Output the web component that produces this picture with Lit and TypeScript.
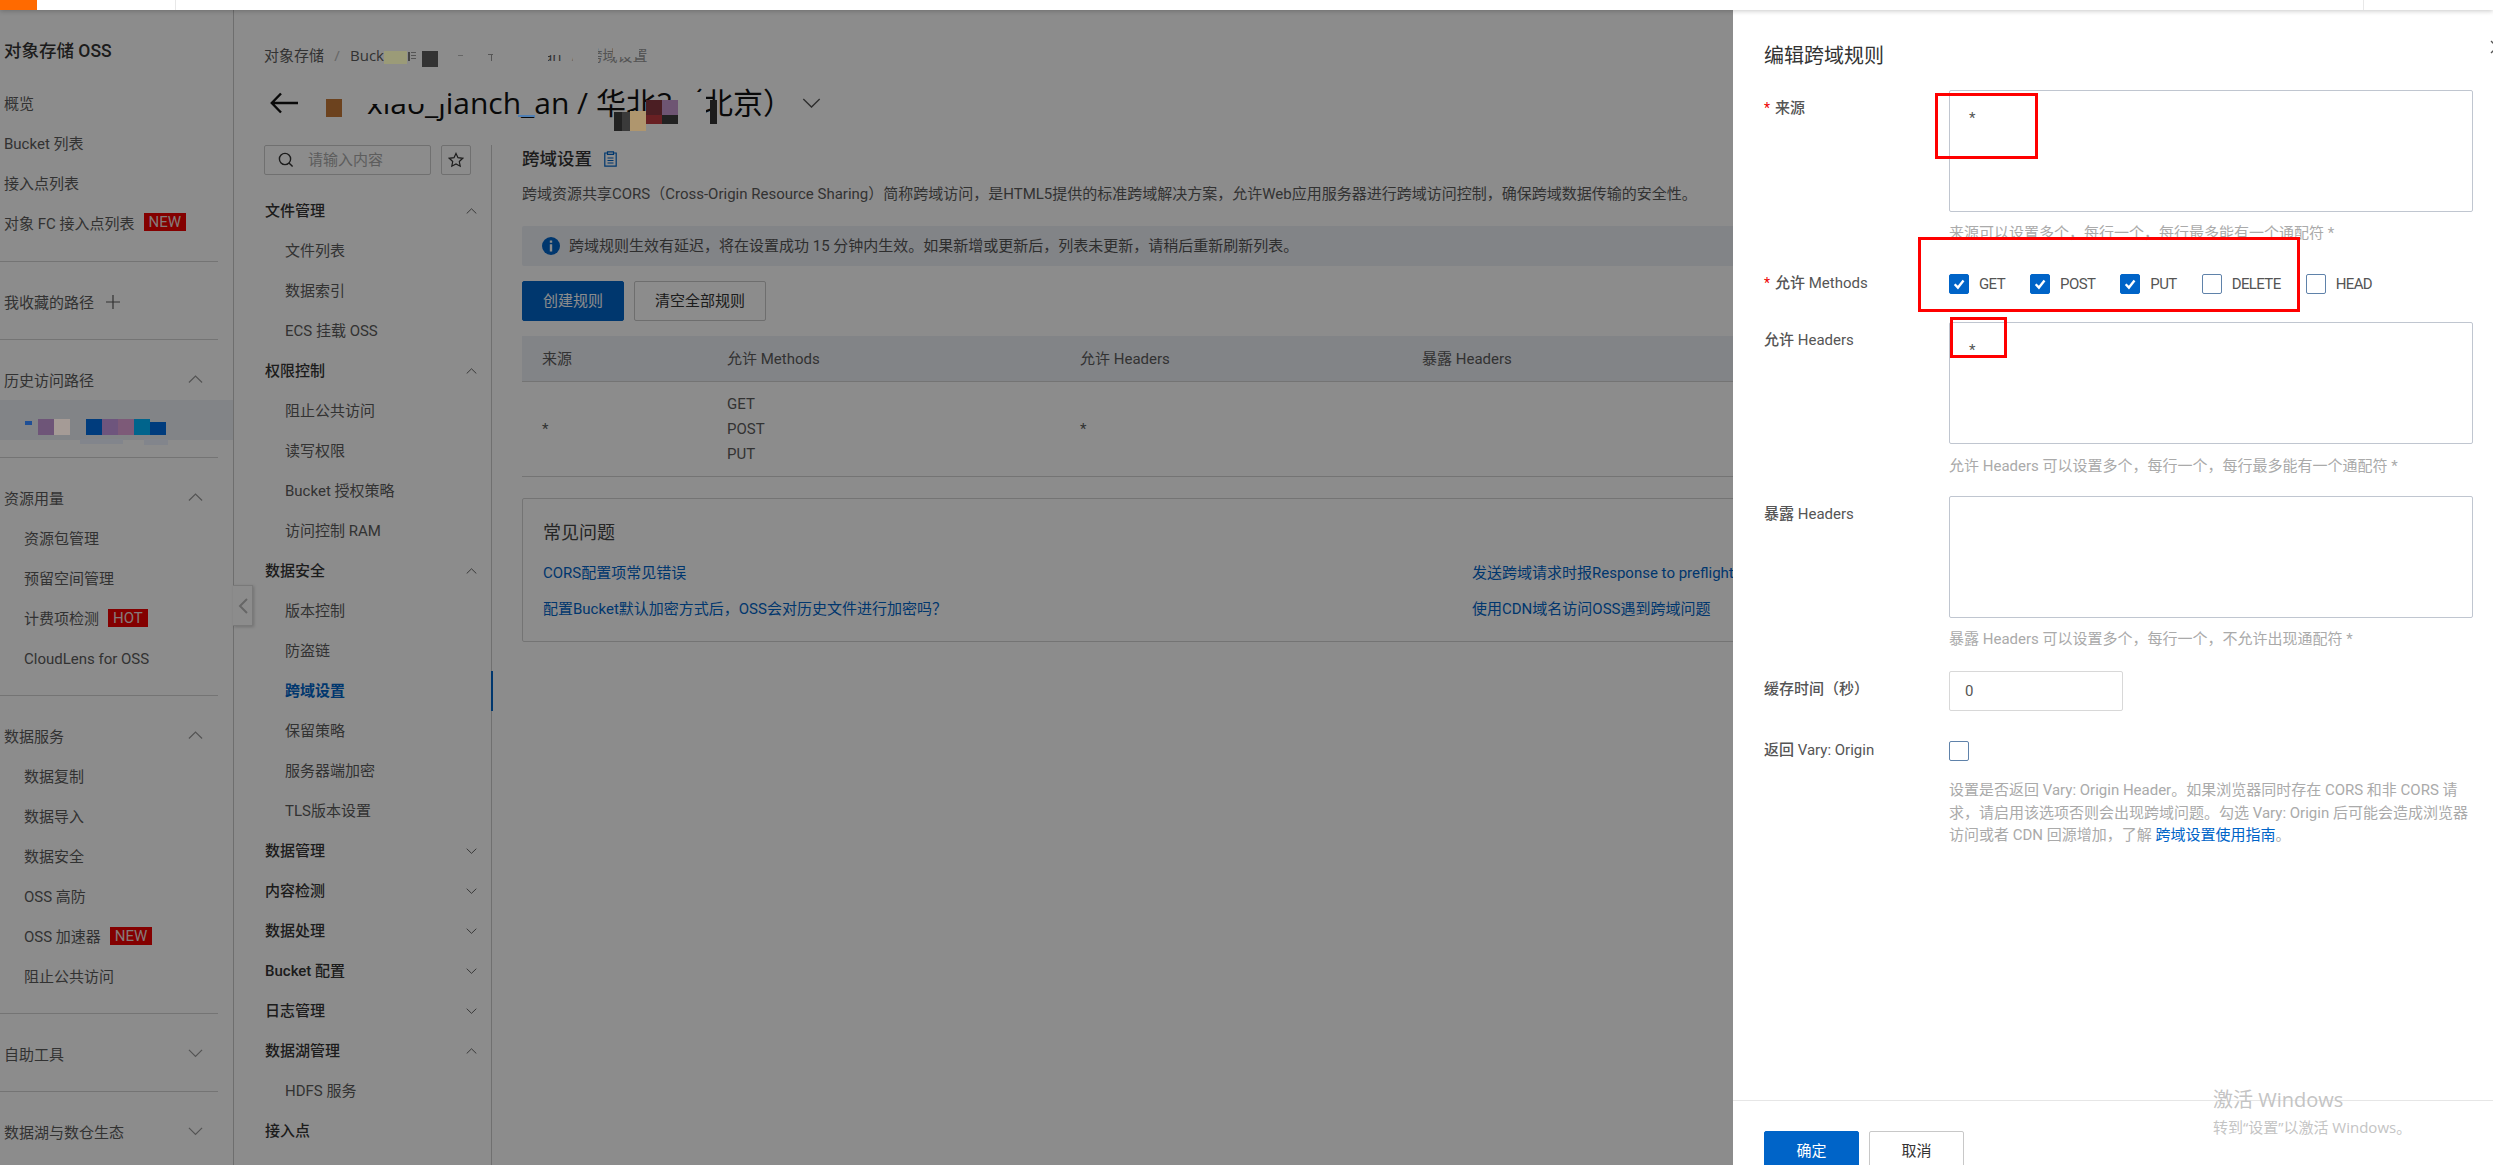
import { LitElement, html, css, svg } from 'lit';
import { customElement } from 'lit/decorators.js';

type NavItem = { text: string; sub?: boolean; badge?: string; open?: boolean; selected?: boolean };

const SIDE_SECTIONS: NavItem[][] = [
  [
    { text: '概览' },
    { text: 'Bucket 列表' },
    { text: '接入点列表' },
    { text: '对象 FC 接入点列表', badge: 'NEW' },
  ],
  [{ text: '我收藏的路径' }],
  [{ text: '历史访问路径', open: true }, { text: '', selected: true }],
  [
    { text: '资源用量', open: true },
    { text: '资源包管理', sub: true },
    { text: '预留空间管理', sub: true },
    { text: '计费项检测', sub: true, badge: 'HOT' },
    { text: 'CloudLens for OSS', sub: true },
  ],
  [
    { text: '数据服务', open: true },
    { text: '数据复制', sub: true },
    { text: '数据导入', sub: true },
    { text: '数据安全', sub: true },
    { text: 'OSS 高防', sub: true },
    { text: 'OSS 加速器', sub: true, badge: 'NEW' },
    { text: '阻止公共访问', sub: true },
  ],
  [{ text: '自助工具', open: false }],
  [{ text: '数据湖与数仓生态', open: false }],
];

type SubItem = { text: string; group?: boolean; open?: boolean; active?: boolean };

const SUB_NAV: SubItem[] = [
  { text: '文件管理', group: true, open: true },
  { text: '文件列表' },
  { text: '数据索引' },
  { text: 'ECS 挂载 OSS' },
  { text: '权限控制', group: true, open: true },
  { text: '阻止公共访问' },
  { text: '读写权限' },
  { text: 'Bucket 授权策略' },
  { text: '访问控制 RAM' },
  { text: '数据安全', group: true, open: true },
  { text: '版本控制' },
  { text: '防盗链' },
  { text: '跨域设置', active: true },
  { text: '保留策略' },
  { text: '服务器端加密' },
  { text: 'TLS版本设置' },
  { text: '数据管理', group: true, open: false },
  { text: '内容检测', group: true, open: false },
  { text: '数据处理', group: true, open: false },
  { text: 'Bucket 配置', group: true, open: false },
  { text: '日志管理', group: true, open: false },
  { text: '数据湖管理', group: true, open: true },
  { text: 'HDFS 服务' },
  { text: '接入点', group: true },
];

// mosaic and cover-up rectangles from the original screenshot: x, y, w, h, colour
const GREY = '#8c8c8c';
const PATCHES: [number, number, number, number, string][] = [
  // breadcrumb
  [384, 46, 164, 20, GREY],
  [548, 46, 25, 9, GREY],
  [573, 46, 25, 20, GREY],
  [613, 46, 26, 11, GREY],
  [384, 51, 23, 13, '#9b9b78'],
  [422, 51, 16, 16, '#333333'],
  [408, 52, 2, 9, '#444444'],
  [411, 52, 5, 1, '#555555'],
  [411, 55, 5, 1, '#555555'],
  [411, 58, 5, 1, '#555555'],
  [458, 55, 5, 1, '#666666'],
  [488, 54, 5, 1, '#555555'],
  [491, 54, 1, 7, '#555555'],
  // heading
  [364, 88, 84, 16, GREY],
  [326, 99, 16, 18, '#6c421e'],
  [518, 115, 17, 2, '#4f7fb4'],
  [614, 112, 8, 19, '#222222'],
  [622, 112, 8, 19, '#3a3a3a'],
  [630, 111, 16, 20, '#af966e'],
  [646, 100, 16, 15, '#4b1e23'],
  [646, 115, 16, 9, '#692023'],
  [662, 100, 16, 15, '#6e5573'],
  [662, 115, 16, 9, '#222222'],
  [678, 92, 28, 34, GREY],
  [710, 100, 7, 24, '#1c1c1c'],
  // history row
  [38, 419, 16, 16, '#6e5578'],
  [54, 419, 16, 16, '#a59b96'],
  [86, 419, 16, 16, '#003c7d'],
  [102, 419, 16, 16, '#6e557d'],
  [118, 419, 16, 16, '#7d5a78'],
  [134, 419, 16, 16, '#00648c'],
  [150, 422, 16, 13, '#003c7d'],
  [25, 421, 7, 4, '#1e4f96'],
  [80, 439, 43, 5, '#82858c'],
  [144, 439, 24, 6, '#82858c'],
];

const chevron = (open: boolean) => html`<svg class="chev" viewBox="0 0 16 9" fill="none" stroke="currentColor" stroke-width="1.3">
  ${open ? svg`<path d="M1 8 8 1.2 15 8" />` : svg`<path d="M1 1 8 7.8 15 1" />`}
</svg>`;

const tick = html`<svg viewBox="0 0 20 20" fill="none" stroke="#fff" stroke-width="2.6"><path d="M5.2 10.2 8.8 14 15 6.2" /></svg>`;

@customElement('app-root')
export class AppRoot extends LitElement {
  private renderSide() {
    return html`<nav class="side">
      <div class="side__title">对象存储 OSS</div>
      ${SIDE_SECTIONS.map(
        (items) => html`<div class="side__section">
          ${items.map((item) => {
            if (item.selected) return html`<div class="side__row side__row--selected"></div>`;
            return html`<div class="side__row ${item.sub ? 'side__row--sub' : ''}">
              <span class="side__text">${item.text}</span>
              ${item.badge ? html`<span class="badge">${item.badge}</span>` : ''}
              ${item.text === '我收藏的路径'
                ? html`<svg class="plus" viewBox="0 0 14 14" stroke="currentColor" stroke-width="1.2"><path d="M7 0v14M0 7h14" /></svg>`
                : ''}
              ${item.open !== undefined ? chevron(item.open) : ''}
            </div>`;
          })}
        </div>`
      )}
    </nav>`;
  }

  private renderSubNav() {
    return html`<aside class="sub">
      <div class="sub__tools">
        <div class="sub__search">
          <svg viewBox="0 0 16 16" fill="none" stroke="#333" stroke-width="1.4"><circle cx="7" cy="7" r="5.6" /><path d="M11 11l3.6 3.6" /></svg>
          <span>请输入内容</span>
        </div>
        <div class="sub__star">
          <svg viewBox="0 0 16 16" fill="none" stroke="#333" stroke-width="1.2"><path d="M8 1.4l2 4.3 4.7.6-3.4 3.2.9 4.7L8 11.9l-4.2 2.3.9-4.7L1.300 6.300l4.700-.6z" /></svg>
        </div>
      </div>
      ${SUB_NAV.map(
        (item) => html`<div class="sub__row ${item.group ? 'sub__row--group' : ''} ${item.active ? 'sub__row--active' : ''}">
          <span>${item.text}</span>
          ${item.open !== undefined ? chevron(item.open) : ''}
        </div>`
      )}
    </aside>`;
  }

  private renderMain() {
    return html`<main class="main">
      <div class="crumbs">
        <span>对象存储</span><i>/</i><span>Bucket 列表</span><i>/</i><span>xiao_jianchuan</span><i>/</i><span class="crumbs__last">跨域设置</span>
      </div>
      <div class="heading">
        <svg class="heading__back" viewBox="0 0 28 22" fill="none" stroke="#111" stroke-width="2.400"><path d="M28 11H2M11 1.500 1.800 11 11 20.500" /></svg>
        <h1>xiao_jianch_an / 华北2（北京）</h1>
        <svg class="heading__more" viewBox="0 0 20 11" fill="none" stroke="#555" stroke-width="1.500"><path d="M1 1l9 9 9-9" /></svg>
      </div>
      <div class="body">
        ${this.renderSubNav()}
        <section class="content">
          <div class="content__title">
            <span>跨域设置</span>
            <svg viewBox="0 0 13 16" fill="none" stroke="#0064c8" stroke-width="1.200"><path d="M3.500 2H.8v13.200h11.400V2H9.500" /><path d="M3.500.8h6v2.600h-6zM3.500 7h6M3.500 9.500h6M3.500 12h6" /></svg>
          </div>
          <p class="content__desc">跨域资源共享CORS（Cross-Origin Resource Sharing）简称跨域访问，是HTML5提供的标准跨域解决方案，允许Web应用服务器进行跨域访问控制，确保跨域数据传输的安全性。</p>
          <div class="alert">
            <svg viewBox="0 0 18 18"><circle cx="9" cy="9" r="9" fill="#0064c8" /><path d="M7.800 3.500h2.400v2.300H7.800zM7.800 7.300h2.400v7.200H7.800z" fill="#fff" /></svg>
            <span>跨域规则生效有延迟，将在设置成功 15 分钟内生效。如果新增或更新后，列表未更新，请稍后重新刷新列表。</span>
          </div>
          <div class="actions">
            <button class="btn btn--primary">创建规则</button>
            <button class="btn">清空全部规则</button>
          </div>
          <div class="table">
            <div class="table__row table__row--head">
              <span>来源</span><span>允许 Methods</span><span>允许 Headers</span><span>暴露 Headers</span>
            </div>
            <div class="table__row table__row--body">
              <span>*</span>
              <span class="table__methods"><span>GET</span><span>POST</span><span>PUT</span></span>
              <span>*</span>
              <span></span>
            </div>
          </div>
          <div class="faq">
            <h2>常见问题</h2>
            <div class="faq__links">
              <a>CORS配置项常见错误</a>
              <a>发送跨域请求时报Response to preflight request doesn't pass access control check</a>
              <a>配置Bucket默认加密方式后，OSS会对历史文件进行加密吗？</a>
              <a>使用CDN域名访问OSS遇到跨域问题</a>
            </div>
          </div>
        </section>
      </div>
    </main>`;
  }

  private renderCheck(label: string, on: boolean) {
    return html`<label class="check">
      <span class="box ${on ? 'box--on' : ''}">${on ? tick : ''}</span>
      <span class="check__text">${label}</span>
    </label>`;
  }

  private renderDrawer() {
    return html`<aside class="drawer">
      <svg class="drawer__close" viewBox="0 0 14 14" stroke="#555" stroke-width="1.300"><path d="M1 1l12 12M13 1 1 13" /></svg>
      <div class="drawer__body">
        <h3>编辑跨域规则</h3>
        <div class="form">
          <div class="label label--field"><b>*</b><em>来源</em></div>
          <div>
            <textarea readonly .value=${'*'}></textarea>
            <div class="help help--first">来源可以设置多个，每行一个，每行最多能有一个通配符 *</div>
          </div>
          <div class="label label--inline label--gap-methods"><b>*</b><em>允许</em> Methods</div>
          <div class="checks">
            ${this.renderCheck('GET', true)} ${this.renderCheck('POST', true)} ${this.renderCheck('PUT', true)}
            ${this.renderCheck('DELETE', false)} ${this.renderCheck('HEAD', false)}
          </div>
          <div class="label label--field label--gap-headers"><em>允许</em> Headers</div>
          <div class="gap-headers">
            <textarea readonly .value=${'*'}></textarea>
            <div class="help help--second">允许 Headers 可以设置多个，每行一个，每行最多能有一个通配符 *</div>
          </div>
          <div class="label label--field label--gap-expose"><em>暴露</em> Headers</div>
          <div class="gap-expose">
            <textarea readonly></textarea>
            <div class="help help--first">暴露 Headers 可以设置多个，每行一个，不允许出现通配符 *</div>
          </div>
          <div class="label label--field label--gap-cache"><em>缓存时间（秒）</em></div>
          <div class="number">0</div>
          <div class="label label--inline label--gap-vary"><em>返回</em> Vary: Origin</div>
          <div class="gap-vary">
            <span class="box"></span>
            <p class="note">设置是否返回 Vary: Origin Header。如果浏览器同时存在 CORS 和非 CORS 请求，请启用该选项否则会出现跨域问题。勾选 Vary: Origin 后可能会造成浏览器访问或者 CDN 回源增加，了解 <a>跨域设置使用指南</a>。</p>
          </div>
        </div>
      </div>
      <div class="drawer__foot">
        <button class="btn btn--primary btn--foot">确定</button>
        <button class="btn btn--foot">取消</button>
      </div>
      <div class="mark mark--one"></div>
      <div class="mark mark--two"></div>
      <div class="mark mark--three"></div>
    </aside>`;
  }

  render() {
    return html`
      <header class="top"><div class="top__logo"></div><div class="top__rule"></div><div class="top__rule top__rule--right"></div></header>
      <div class="page">${this.renderSide()}${this.renderMain()}</div>
      <button class="collapse" aria-label="收起">
        <svg viewBox="0 0 10 16" fill="none" stroke="#bbb" stroke-width="2"><path d="M9 1 2 8l7 7" /></svg>
      </button>
      <div class="mask"></div>
      ${PATCHES.map(
        ([x, y, w, h, c]) => html`<span class="patch" style="left:${x}px;top:${y}px;width:${w}px;height:${h}px;background:${c}"></span>`
      )}
      ${this.renderDrawer()}
      <div class="activate">
        <div class="activate__big">激活 Windows</div>
        <div>转到“设置”以激活 Windows。</div>
      </div>
    `;
  }

  static styles = css`
    :host {
      display: block;
      position: relative;
      height: 100vh;
      overflow: hidden;
      background: #fff;
      color: #5c5c5c;
      font: 15px/20px Roboto, 'Noto Sans CJK SC', sans-serif;
    }
    * {
      box-sizing: border-box;
    }
    h1,
    h2,
    h3,
    p {
      margin: 0;
      font-weight: 400;
    }
    svg {
      display: block;
      flex: none;
    }

    .top {
      position: relative;
      z-index: 6;
      display: flex;
      height: 10px;
      background: #fff;
      box-shadow: 0 1px 5px rgba(0, 0, 0, 0.22);
    }
    .top__logo {
      width: 37px;
      background: #ff6a00;
    }
    .top__rule {
      width: 1px;
      margin-left: 138px;
      background: #e8e8e8;
    }
    .top__rule--right {
      margin-left: 2187px;
    }

    .page {
      display: flex;
      height: 1155px;
    }

    .side {
      flex: none;
      width: 234px;
      border-right: 1px solid #c8c8c8;
    }
    .side__title {
      height: 66px;
      padding: 31px 0 0 4px;
      font-size: 17.500px;
      font-weight: 500;
      line-height: 20px;
      color: #333;
    }
    .side__section {
      width: 218px;
      padding: 6px 0 19px;
      border-bottom: 1px solid #d4d4d4;
    }
    .side__section + .side__section {
      padding: 19.500px 0 17.500px;
    }
    .side__section:last-child {
      border-bottom: 0;
    }
    .side__row {
      display: flex;
      align-items: center;
      height: 40px;
      padding-left: 4px;
      white-space: nowrap;
    }
    .side__text {
      padding-top: 3px;
    }
    .side__row--sub {
      padding-left: 24px;
    }
    .side__row--selected {
      width: 233px;
      background: #edf0f6;
    }
    .side__row .chev {
      width: 15px;
      margin: 0 15px 0 auto;
      color: #999;
    }
    .badge {
      margin-left: 9px;
      padding: 0 5px;
      height: 18px;
      line-height: 18px;
      background: #f00000;
      color: #f4dede;
    }
    .plus {
      width: 14px;
      height: 14px;
      margin-left: 12px;
    }

    .main {
      flex: 1;
      min-width: 0;
    }
    .crumbs {
      display: flex;
      height: 20px;
      margin: 35px 0 0 30px;
      white-space: nowrap;
      font-family: 'Open Sans', 'Noto Sans CJK SC', sans-serif;
    }
    .crumbs i {
      width: 26px;
      text-align: center;
      font-style: normal;
      color: #bbb;
    }
    .crumbs__last {
      color: #999;
    }
    .heading {
      display: flex;
      align-items: center;
      height: 44px;
      margin: 16px 0 0 36px;
    }
    .heading__back {
      width: 28px;
      height: 22px;
    }
    .heading h1 {
      margin-left: 69px;
      font-family: 'Open Sans', 'Noto Sans CJK SC', sans-serif;
      font-size: 30px;
      line-height: 44px;
      color: #111;
      white-space: nowrap;
    }
    .heading__more {
      width: 19px;
      height: 10px;
      margin-left: 9px;
    }

    .body {
      display: flex;
      margin-top: 20px;
    }

    .sub {
      flex: none;
      width: 258px;
      height: 1020px;
      padding-left: 30px;
      border-right: 1px solid #ccc;
    }
    .sub__tools {
      display: flex;
      gap: 10px;
      margin-bottom: 0;
    }
    .sub__search {
      display: flex;
      align-items: center;
      width: 167px;
      height: 30px;
      padding-left: 13px;
      border: 1px solid #ccc;
      border-radius: 2px;
      color: #aaa;
    }
    .sub__search svg {
      width: 16px;
      height: 16px;
      margin-right: 14px;
    }
    .sub__star {
      display: flex;
      align-items: center;
      justify-content: center;
      width: 30px;
      height: 30px;
      border: 1px solid #ccc;
      border-radius: 2px;
    }
    .sub__star svg {
      width: 16px;
      height: 16px;
    }
    .sub__row {
      position: relative;
      display: flex;
      align-items: center;
      width: 228px;
      height: 40px;
      padding-left: 21px;
      white-space: nowrap;
    }
    .sub__tools + .sub__row {
      margin-top: 16px;
    }
    .sub__row--group {
      padding-left: 1px;
      font-weight: 500;
      color: #333;
    }
    .sub__row .chev {
      width: 11px;
      margin: 0 0 0 auto;
      margin-right: 15px;
      color: #555;
    }
    .sub__row--active {
      font-weight: 700;
      color: #0064c8;
    }
    .sub__row--active::after {
      content: '';
      position: absolute;
      top: 0;
      right: -1px;
      width: 2px;
      height: 40px;
      background: #0064c8;
    }

    .content {
      flex: 1;
      min-width: 0;
      padding: 0 0 0 30px;
    }
    .content__title {
      display: flex;
      align-items: center;
      height: 20px;
      margin-top: 4px;
      font-size: 17.500px;
      font-weight: 500;
      color: #333;
    }
    .content__title svg {
      width: 13px;
      height: 16px;
      margin-left: 12px;
    }
    .content__desc {
      margin-top: 15px;
      white-space: nowrap;
    }
    .alert {
      display: flex;
      align-items: center;
      height: 40px;
      margin-top: 22px;
      padding-left: 20px;
      border-radius: 2px;
      background: #edf0f6;
      white-space: nowrap;
      color: #555;
    }
    .alert svg {
      width: 18px;
      height: 18px;
      margin-right: 9px;
    }
    .actions {
      display: flex;
      gap: 10px;
      margin-top: 15px;
    }
    .btn {
      height: 40px;
      padding: 0 20px;
      border: 1px solid #c8c8c8;
      border-radius: 2px;
      background: #fff;
      color: #333;
      font: inherit;
    }
    .btn--primary {
      border-color: #0064c8;
      background: #0064c8;
      color: #fff;
    }
    .table {
      margin-top: 15px;
    }
    .table__row {
      display: grid;
      grid-template-columns: 185px 353px 342px 1fr;
      align-items: center;
      padding-left: 20px;
    }
    .table__row--head {
      height: 46px;
      background: #edf0f6;
      border-bottom: 1px solid #d4d4d4;
    }
    .table__row--body {
      height: 95px;
      border-bottom: 1px solid #d4d4d4;
    }
    .table__methods {
      display: flex;
      flex-direction: column;
      line-height: 25px;
    }
    .faq {
      height: 144px;
      margin-top: 21px;
      padding: 24px 20px 0;
      border: 1px solid #d4d4d4;
      border-radius: 2px;
    }
    .faq h2 {
      font-size: 18px;
      line-height: 20px;
      color: #444;
    }
    .faq__links {
      display: grid;
      grid-template-columns: 929px 1fr;
      row-gap: 16px;
      margin-top: 20px;
      white-space: nowrap;
    }
    .faq a {
      color: #0064c8;
    }

    .collapse {
      position: absolute;
      z-index: 1;
      left: 233px;
      top: 585px;
      width: 20px;
      height: 41px;
      padding: 0 0 0 5px;
      border: 1px solid #ddd;
      border-left: 0;
      background: #fff;
      box-shadow: 1px 1px 3px rgba(0, 0, 0, 0.2);
    }
    .collapse svg {
      width: 10px;
      height: 16px;
    }

    .mask {
      position: absolute;
      z-index: 2;
      inset: 10px 0 0 0;
      background: rgba(0, 0, 0, 0.45);
    }
    .patch {
      position: absolute;
      z-index: 3;
    }

    .drawer {
      position: absolute;
      z-index: 4;
      top: 10px;
      right: 0;
      bottom: 0;
      left: 1733px;
      display: flex;
      flex-direction: column;
      overflow: hidden;
      background: #fff;
      color: #555;
    }
    .drawer__close {
      position: absolute;
      top: 30px;
      left: 757px;
      width: 14px;
      height: 14px;
    }
    .drawer__body {
      flex: 1;
      padding: 31px 20.500px 0 31px;
    }
    .drawer h3 {
      height: 30px;
      margin-bottom: 19px;
      font-size: 20px;
      line-height: 30px;
      color: #333;
    }
    .form {
      display: grid;
      grid-template-columns: 185px 1fr;
      align-items: start;
    }
    .label {
      white-space: nowrap;
    }
    .label em {
      font-style: normal;
      font-weight: 500;
    }
    .label b {
      margin-right: 5px;
      font-weight: 400;
      font-size: 14px;
      color: #e00;
    }
    .label--field {
      padding-top: 8px;
    }
    .label--inline {
      margin-top: -1px;
    }
    .label--gap-methods {
      margin-top: 29px;
    }
    .label--gap-headers,
    .gap-headers {
      margin-top: 28px;
    }
    .label--gap-expose,
    .gap-expose {
      margin-top: 19px;
    }
    .label--gap-cache {
      margin-top: 21px;
    }
    .label--gap-vary {
      margin-top: 29px;
    }
    .gap-vary {
      margin-top: 30px;
    }
    textarea {
      display: block;
      width: 100%;
      height: 122px;
      padding: 17px 19px;
      border: 1px solid #c0c6d0;
      border-radius: 2px;
      outline: 0;
      resize: none;
      font: inherit;
      color: #555;
    }
    .help {
      line-height: 22px;
      white-space: nowrap;
      color: #aaa;
    }
    .help--first {
      margin-top: 10px;
    }
    .help--second {
      margin-top: 11px;
    }
    .checks {
      display: flex;
      margin-top: 30px;
    }
    .check {
      display: flex;
      align-items: center;
      gap: 10px;
      margin-right: 25px;
    }
    .check__text {
      letter-spacing: -0.6px;
    }
    .box {
      display: block;
      width: 20px;
      height: 20px;
      border: 1px solid #5f82aa;
      border-radius: 2px;
      background: #fff;
    }
    .box--on {
      border-color: #0064c8;
      background: #0064c8;
    }
    .box svg {
      width: 18px;
      height: 18px;
    }
    .number {
      width: 174px;
      height: 40px;
      margin-top: 21px;
      padding-left: 15px;
      border: 1px solid #d8d8d8;
      border-radius: 2px;
      line-height: 39px;
    }
    .note {
      margin-top: 18px;
      line-height: 22.500px;
      color: #aaa;
    }
    .note a {
      color: #0064c8;
    }
    .drawer__foot {
      display: flex;
      gap: 10px;
      flex: none;
      height: 65px;
      padding: 30px 0 0 31px;
      border-top: 1px solid #e6e6e6;
    }
    .btn--foot {
      width: 95px;
      flex: none;
      padding: 0;
    }
    .mark {
      position: absolute;
      border: 3px solid #f00;
    }
    .mark--one {
      left: 202px;
      top: 83px;
      width: 103px;
      height: 66px;
    }
    .mark--two {
      left: 185px;
      top: 227px;
      width: 382px;
      height: 75px;
    }
    .mark--three {
      left: 217px;
      top: 307px;
      width: 57px;
      height: 41px;
    }

    .activate {
      position: absolute;
      z-index: 5;
      left: 2213px;
      top: 1086px;
      color: #c4c4c4;
      font-family: 'Open Sans', 'Noto Sans CJK SC', sans-serif;
      white-space: nowrap;
    }
    .activate__big {
      margin-bottom: 3px;
      font-size: 20px;
      line-height: 28px;
    }
  `;
}

declare global {
  interface HTMLElementTagNameMap {
    'app-root': AppRoot;
  }
}
